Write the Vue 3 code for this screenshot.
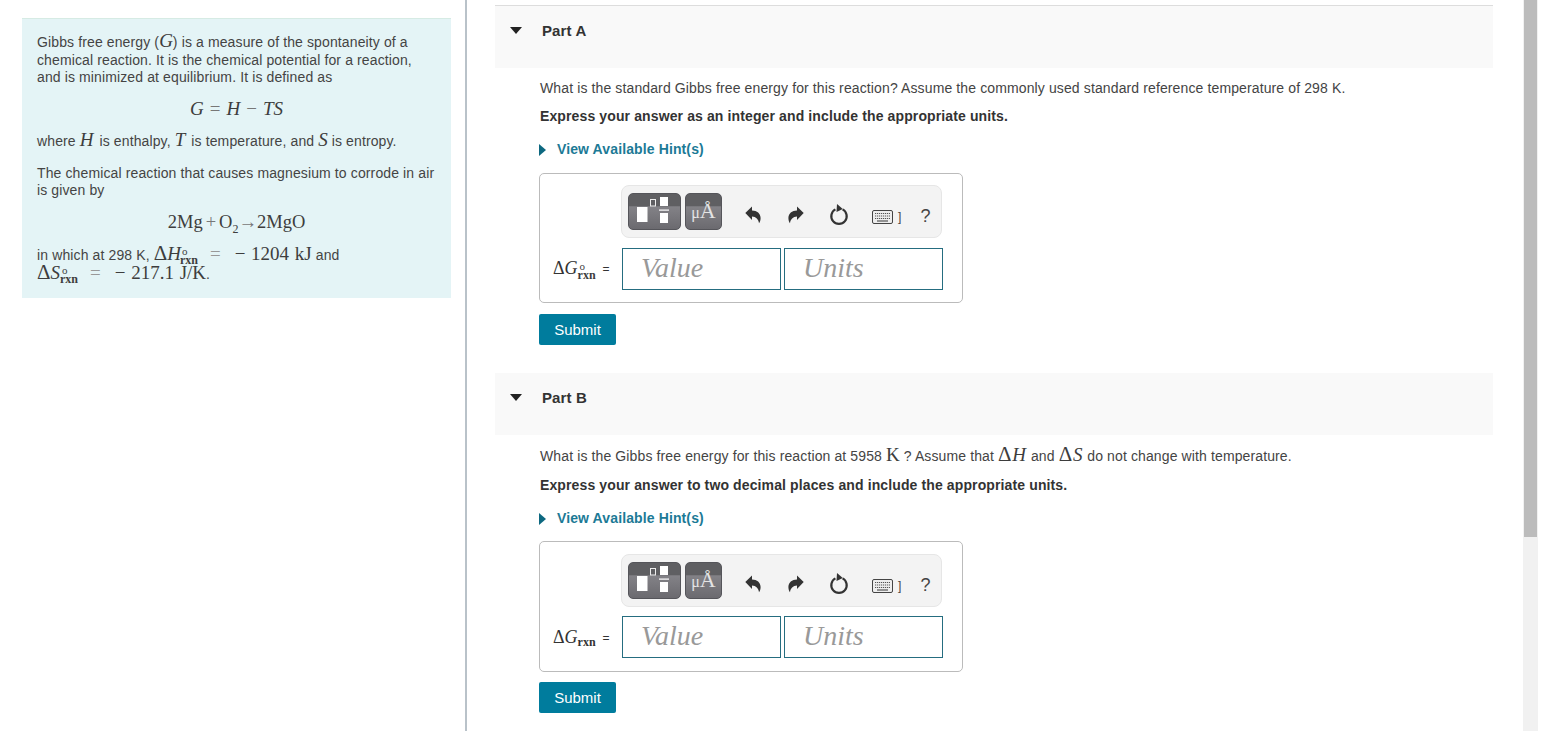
<script setup>
const parts = [
  {
    name: 'Part A',
    express: 'Express your answer as an integer and include the appropriate units.',
    degree: true
  },
  {
    name: 'Part B',
    express: 'Express your answer to two decimal places and include the appropriate units.',
    degree: false
  }
]
</script>

<template>
  <div class="page">
    <aside class="left">
      <div class="intro">
        <p class="t3">Gibbs free energy (<i class="m big">G</i>) is a measure of the spontaneity of a chemical reaction. It is the chemical potential for a reaction, and is minimized at equilibrium. It is defined as</p>
        <div class="eq eq1"><i>G</i><span class="op">=</span><i>H</i><span class="op">−</span><i>TS</i></div>
        <p class="where">where <i class="m big sp">H</i> is enthalpy, <i class="m big sp">T</i> is temperature, and <i class="m big">S</i> is entropy.</p>
        <p class="chem">The chemical reaction that causes magnesium to corrode in air is given by</p>
        <div class="eq eq2">2Mg<span class="op">+</span>O<sub>2</sub><span class="arrow">→</span>2MgO</div>
        <p class="last">
          in which at 298 K, <span class="m big"><span class="dl">Δ</span><i>H</i><span class="stack tight"><span class="up">o</span><span class="down">rxn</span></span><span class="gap">=</span><span class="gap2">− 1204 kJ</span></span> and<br />
          <span class="m big"><span class="dl">Δ</span><i>S</i><span class="stack"><span class="up">o</span><span class="down">rxn</span></span><span class="gap">=</span><span class="gap2">− 217.1 J/K</span></span>.
        </p>
      </div>
    </aside>

    <main class="right">
      <section v-for="(part, i) in parts" :key="part.name" class="part" :class="{ first: i === 0 }">
        <header class="part-head">
          <span class="caret"></span>
          <span class="part-name">{{ part.name }}</span>
        </header>

        <div class="part-body">
          <p v-if="i === 0" class="question">What is the standard Gibbs free energy for this reaction? Assume the commonly used standard reference temperature of 298 K.</p>
          <p v-else class="question q2">What is the Gibbs free energy for this reaction at 5958 <span class="m big">K</span> ? Assume that <span class="m big wide"><span class="dl">Δ</span><i>H</i></span> and <span class="m big wide"><span class="dl">Δ</span><i>S</i></span> do not change with temperature.</p>
          <p class="express">{{ part.express }}</p>
          <div class="hint"><span class="hint-arrow"></span>View Available Hint(s)</div>

          <div class="answer">
            <div class="toolbar">
              <button class="tpl tpl-wide" type="button" aria-label="Templates">
                <svg width="53" height="37" viewBox="0 0 53 37">
                  <rect x="9" y="14" width="10.5" height="15" fill="#fff" />
                  <rect x="22.5" y="6.5" width="5" height="6.5" fill="none" stroke="#eee" stroke-width="1" />
                  <rect x="32" y="4" width="8" height="9" fill="#fff" />
                  <rect x="31" y="16.5" width="10" height="1.2" fill="#fff" />
                  <rect x="32" y="20" width="8" height="10" fill="#fff" />
                </svg>
              </button>
              <button class="tpl tpl-unit" type="button">
                <span class="mu">μ</span><span class="ang">Å</span>
              </button>
              <svg class="ico undo" width="16" height="18" viewBox="0 0 16 18">
                <path d="M0.3 7 L7 0.5 V4.5 C12 4.5 15.6 7.5 15.6 12 C15.6 14 15 16 14 17.2 C13.5 13.5 11 10.5 7 10.5 V14 Z" fill="#333" />
              </svg>
              <svg class="ico redo" width="16" height="18" viewBox="0 0 16 18">
                <path d="M15.7 7 L9 0.5 V4.5 C4 4.5 0.4 7.5 0.4 12 C0.4 14 1 16 2 17.2 C2.5 13.5 5 10.5 9 10.5 V14 Z" fill="#333" />
              </svg>
              <svg class="ico reset" width="20" height="24" viewBox="0 0 20 24">
                <path d="M6.4 6.4 A7.7 7.7 0 1 0 13.6 6.4" fill="none" stroke="#333" stroke-width="2.2" />
                <path d="M8 1 L13.8 6 L7.5 9 Z" fill="#333" />
              </svg>
              <svg class="ico kbd" width="21" height="14" viewBox="0 0 21 14">
                <rect x="0.5" y="0.5" width="20" height="13" rx="1.5" fill="#eee" stroke="#444" />
                <path d="M3 3.5 H18 M3 6 H18 M3 8.5 H18" stroke="#555" stroke-width="1.2" stroke-dasharray="1.2 0.8" />
                <path d="M5 11 H16" stroke="#555" stroke-width="1.2" />
              </svg>
              <span class="bracket">]</span>
              <span class="help">?</span>
            </div>

            <div class="inputs">
              <span class="label m">Δ<i>G</i><span v-if="part.degree" class="stack small"><span class="up">o</span><span class="down">rxn</span></span><span v-else class="plain-sub">rxn</span><span class="eqs">=</span></span>
              <input class="field value" type="text" placeholder="Value" />
              <input class="field units" type="text" placeholder="Units" />
            </div>
          </div>

          <button class="submit" type="button">Submit</button>
        </div>
      </section>
    </main>

    <div class="scroll"><div class="track"><div class="thumb"></div></div></div>
  </div>
</template>

<style>
html,
body {
  margin: 0;
  overflow: hidden;
  background: #fff;
}
</style>

<style scoped>
.page {
  display: flex;
  height: 731px;
  width: 1543px;
  overflow: hidden;
  font-family: "Liberation Sans", Arial, sans-serif;
  font-size: 14px;
  letter-spacing: 0.12px;
  color: #444;
}

p {
  margin: 0;
}

.left {
  width: 467px;
  flex: none;
  box-sizing: border-box;
  border-right: 2px solid #b9c2c9;
  padding: 18px 14px 0 22px;
}

.intro {
  background: #e4f4f6;
  border-top: 1px solid #d6ebe4;
  padding: 15px 15px 0;
  height: 280px;
  box-sizing: border-box;
  line-height: 17.5px;
}

.m {
  font-family: "Liberation Serif", "Times New Roman", serif;
  letter-spacing: 0;
}

.big {
  font-size: 19px;
  color: #3d3d3d;
  line-height: 0;
}

.sp {
  margin-right: 2px;
}

.dl {
  font-size: 21px;
}

.wide {
  letter-spacing: 0.8px;
}

.t3 {
  width: 392px;
}

.eq {
  font-family: "Liberation Serif", "Times New Roman", serif;
  font-size: 18.5px;
  letter-spacing: 0;
  text-align: center;
  color: #3d3d3d;
}

.op {
  margin: 0 5px;
  color: #777;
}

.arrow {
  color: #777;
}

.eq1 {
  margin-top: 12px;
  line-height: 20px;
  font-size: 19px;
}

.eq1 .op {
  margin: 0 6px;
}

.where {
  margin-top: 12px;
  line-height: 20px;
}

.chem {
  margin-top: 14px;
}

.eq2 {
  margin-top: 12px;
  line-height: 20px;
}

.eq2 .op {
  margin: 0 3px;
}

.eq2 sub {
  font-size: 12px;
  line-height: 0;
}

.last {
  margin-top: 14px;
  line-height: 18px;
}

.stack {
  display: inline-flex;
  flex-direction: column;
  vertical-align: 5px;
  width: 19px;
  color: #3d3d3d;
  letter-spacing: 0;
}

.tight {
  margin-left: -1px;
}

.stack .up {
  font-size: 11px;
  line-height: 8px;
  padding-left: 2px;
}

.stack .down {
  line-height: 10px;
  font-weight: bold;
  font-size: 12px;
}

.gap {
  margin-left: 11px;
  color: #999;
}

.gap2 {
  margin-left: 14px;
  word-spacing: 1px;
}

.right {
  width: 1056px;
  flex: none;
  padding: 5px 0 0 28px;
  box-sizing: border-box;
}

.part {
  width: 998px;
}

.part.first {
  border-top: 1px solid #ddd;
}

.part:not(.first) {
  margin-top: 28px;
}

.part-head {
  height: 62px;
  background: #f9f9f9;
  display: flex;
  align-items: flex-start;
  box-sizing: border-box;
  padding: 16px 0 0 15px;
}

.caret {
  width: 0;
  height: 0;
  margin-top: 5px;
  border-left: 6.5px solid transparent;
  border-right: 6.5px solid transparent;
  border-top: 7px solid #222;
}

.part-name {
  margin-left: 20px;
  font-size: 15px;
  font-weight: bold;
  color: #333;
  line-height: 18px;
}

.part-body {
  padding: 12px 0 0 44px;
}

.question {
  line-height: 17px;
  margin-left: 1px;
}

.q2 {
  margin-top: 0;
  line-height: 18px;
}

.express {
  margin: 11px 0 0 1px;
  font-weight: bold;
  color: #333;
  line-height: 17px;
}

.q2 + .express {
  margin-top: 12px;
}

.hint {
  margin-top: 16px;
  height: 17px;
  line-height: 17px;
  font-weight: bold;
  color: #1c7a96;
  display: flex;
  align-items: center;
}

.hint-arrow {
  width: 0;
  height: 0;
  margin-right: 11px;
  border-top: 6.5px solid transparent;
  border-bottom: 6.5px solid transparent;
  border-left: 7px solid #0d6880;
}

.answer {
  margin-top: 15px;
  width: 424px;
  height: 130px;
  box-sizing: border-box;
  border: 1px solid #bbb;
  border-radius: 5px;
  padding: 11px 0 0 81px;
}

.part:not(.first) .answer {
  height: 131px;
  margin-top: 14px;
  padding-top: 12px;
}

.toolbar {
  width: 321px;
  height: 53px;
  box-sizing: border-box;
  background: #f3f3f3;
  border: 1px solid #e6e6e6;
  border-radius: 8px;
  display: flex;
  align-items: center;
  padding-left: 6px;
}

.tpl {
  height: 37px;
  padding: 0;
  border: 1px solid #55555a;
  border-radius: 5px;
  background: linear-gradient(#5f5f62 0, #5f5f62 35%, #838287 36%, #6b6a6f 100%);
  box-sizing: border-box;
  display: block;
}

.tpl-wide {
  width: 53px;
}

.tpl-wide svg {
  display: block;
  margin: -1px;
}

.tpl-unit {
  width: 37px;
  margin-left: 4px;
  font-family: "Liberation Serif", serif;
  color: #e4e4e4;
  font-size: 19px;
  line-height: 32px;
  text-align: center;
  letter-spacing: 0;
}

.mu {
  font-size: 16px;
}

.ang {
  font-size: 22px;
}

.ico {
  flex: none;
  display: block;
  margin-top: 6px;
}

.undo {
  margin-left: 23px;
}

.redo {
  margin-left: 27px;
}

.reset {
  margin-left: 25px;
}

.kbd {
  margin-left: 23px;
  margin-top: 10px;
}

.bracket {
  margin-left: 5px;
  font-size: 12px;
  color: #444;
  margin-top: 10px;
}

.help {
  margin-left: 19px;
  margin-top: 10px;
  font-size: 18px;
  color: #444;
}

.inputs {
  margin: 10px 0 0 -69px;
  display: flex;
  align-items: center;
}

.part:not(.first) .inputs {
  margin-top: 9px;
}

.label {
  width: 70px;
  padding-left: 1px;
  box-sizing: border-box;
  flex: none;
  font-size: 18px;
  color: #333;
  white-space: nowrap;
  line-height: 20px;
}

.stack.small {
  width: 20px;
  vertical-align: 4px;
}

.plain-sub {
  display: inline-block;
  width: 20px;
  font-size: 12px;
  font-weight: bold;
  vertical-align: -3px;
  line-height: 12px;
}

.eqs {
  font-family: "Liberation Sans", sans-serif;
  font-size: 12px;
  margin-left: 5px;
  vertical-align: 1px;
}

.field {
  height: 42px;
  box-sizing: border-box;
  border: 1px solid #256d80;
  background: #fff;
  outline: none;
  padding: 0 0 2px 18px;
  font-family: "Liberation Serif", "Times New Roman", serif;
  font-style: italic;
  font-size: 28px;
  color: #333;
}

.field::placeholder {
  color: #999;
  opacity: 1;
}

.value {
  width: 159px;
}

.units {
  width: 159px;
  margin-left: 3px;
}

.submit {
  display: block;
  margin-top: 11px;
  width: 77px;
  height: 31px;
  border: 0;
  border-radius: 2px;
  background: #007c9d;
  color: #fff;
  font-family: "Liberation Sans", Arial, sans-serif;
  font-size: 15px;
  padding: 0;
}

.part:not(.first) .submit {
  margin-top: 10px;
}

.scroll {
  width: 20px;
  flex: none;
}

.track {
  width: 15px;
  height: 731px;
  background: #f1f1f1;
}

.thumb {
  width: 13px;
  height: 537px;
  margin-left: 1px;
  background: #bcbcbc;
}
</style>
